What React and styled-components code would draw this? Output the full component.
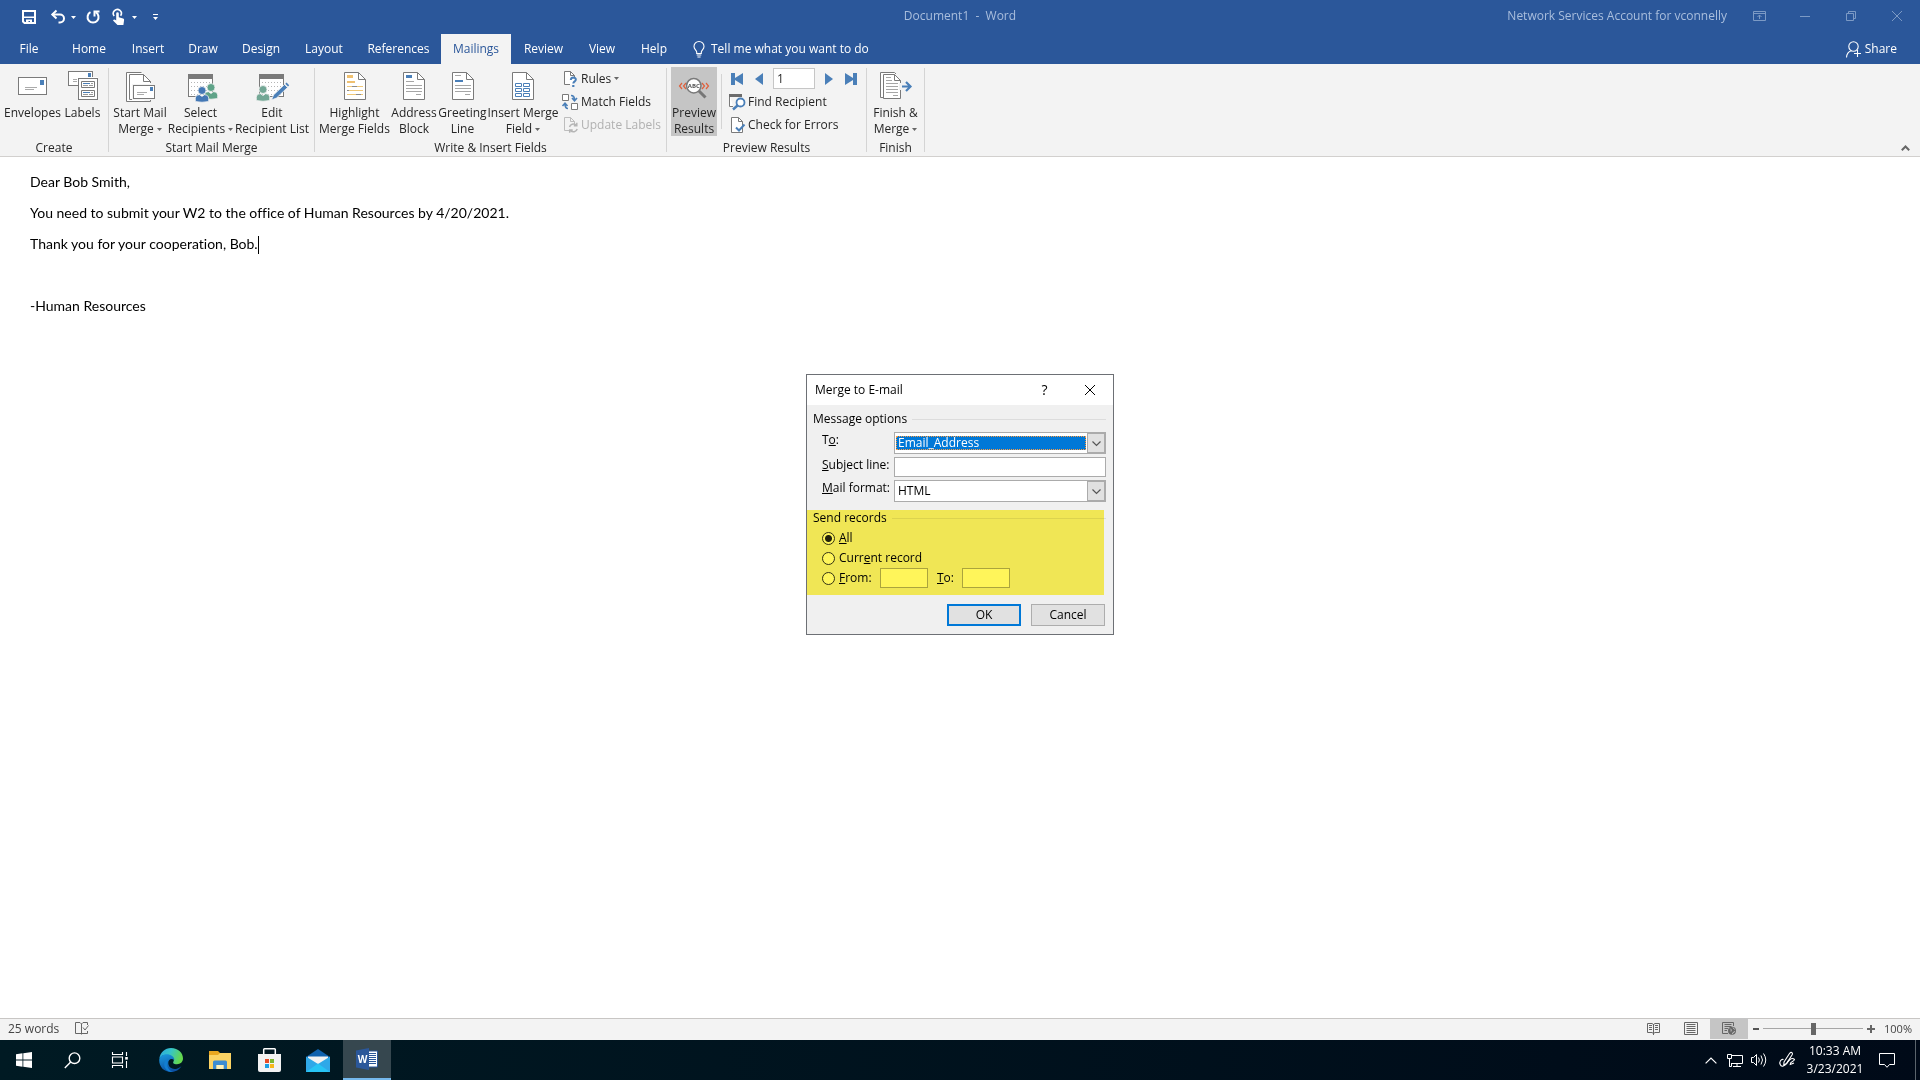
import React, { useState } from 'react';
import styled, { createGlobalStyle } from 'styled-components';

const GlobalStyle = createGlobalStyle`
  * {
    box-sizing: border-box;
  }
  body {
    margin: 0;
    font-family: 'Open Sans', 'Noto Sans', sans-serif;
    font-size: 12px;
    line-height: 16px;
    color: #262626;
  }
  button, input, select {
    font: inherit;
    color: inherit;
  }
  button {
    padding: 0;
    border: 0;
    background: none;
    white-space: nowrap;
  }
  svg {
    display: block;
    flex: none;
    overflow: visible;
  }
`;

const Screen = styled.div`
  display: flex;
  flex-direction: column;
  min-height: 100vh;
  background: white;
`;

/* Title bar */

const TitleBar = styled.header`
  display: grid;
  grid-template-columns: 1fr auto 1fr;
  align-items: center;
  height: 34px;
  padding-bottom: 2px;
  background: #2b579a;
  color: #a9bedd;
`;

const QuickAccess = styled.div`
  display: flex;
  align-items: center;
  padding: 2px 0 0 22px;
`;

const QuickButton = styled.button`
  display: flex;
  align-items: center;
  justify-content: center;
  width: ${({ $width }) => $width}px;
  height: 26px;
  margin-right: ${({ $gap }) => $gap || 0}px;
`;

const WindowTitle = styled.div`
  white-space: pre;
`;

const WindowTools = styled.div`
  display: flex;
  align-items: center;
  justify-content: flex-end;
`;

const Account = styled.span`
  margin-right: 9px;
`;

const WindowButton = styled.button`
  display: flex;
  align-items: center;
  justify-content: center;
  width: 46px;
  height: 30px;
`;

/* Tabs */

const TabBar = styled.nav`
  display: flex;
  height: 30px;
  background: #2b579a;
  color: white;
`;

const Tab = styled.button`
  width: ${({ $width }) => $width}px;
  background: ${({ $active }) => ($active ? '#f3f3f3' : 'transparent')};
  color: ${({ $active }) => ($active ? '#2b579a' : 'white')};
`;

const TellMe = styled.button`
  display: flex;
  align-items: center;
  gap: 6px;
  padding-left: 13px;
`;

const Share = styled.button`
  display: flex;
  align-items: center;
  gap: 4px;
  margin-left: auto;
  padding-right: 23px;
`;

/* Ribbon */

const Ribbon = styled.div`
  display: flex;
  height: 93px;
  background: #f3f3f3;
  border-bottom: 1px solid #d2d0ce;
`;

const Group = styled.section`
  display: flex;
  flex-direction: column;
  padding: 3px 5px 0 4px;
  background: linear-gradient(#d4d4d4, #d4d4d4) no-repeat right 4px / 1px 84px;
`;

const GroupRow = styled.div`
  display: flex;
  height: 74px;
`;

const GroupName = styled.div`
  text-align: center;
  white-space: nowrap;
`;

const LargeButton = styled.button`
  display: flex;
  flex-direction: column;
  align-items: center;
  width: ${({ $width }) => $width}px;
  height: 69px;
  padding-top: 3px;
  background: ${({ $pressed }) => ($pressed ? '#c5c5c5' : 'transparent')};

  > svg {
    margin-bottom: 1px;
  }
`;

const ButtonLine = styled.span`
  display: flex;
  align-items: center;
  gap: 3px;
`;

const SmallColumn = styled.div`
  width: ${({ $width }) => $width}px;
  padding-left: ${({ $indent }) => $indent}px;
`;

const SmallButton = styled.button`
  display: flex;
  align-items: center;
  gap: 2px;
  height: 23px;
  color: ${({ disabled }) => (disabled ? '#b1b1b1' : 'inherit')};
`;

const Divider = styled.div`
  width: 1px;
  height: 55px;
  margin: 7px 0 0 4px;
  background: #d4d4d4;
`;

const RecordNav = styled.div`
  display: flex;
  align-items: center;
  gap: 12px;
  height: 23px;
  padding-left: 2px;
`;

const RecordInput = styled.input`
  width: 42px;
  height: 21px;
  margin: 0 -2px;
  padding: 0 3px;
  border: 1px solid #c6c6c6;
  background: white;
`;

const Collapse = styled.button`
  margin: auto 10px 5px auto;
`;

/* Document */

const Page = styled.main`
  flex: 1;
  padding: 15px 30px;
  font-family: Lato, 'Open Sans', sans-serif;
  font-size: 14px;
  font-variant-ligatures: none;
  line-height: 20px;
  color: black;
`;

const Paragraph = styled.p`
  min-height: 20px;
  margin: 0 0 11px;
`;

const TextCaret = styled.span`
  display: inline-block;
  width: 1px;
  height: 18px;
  background: black;
  vertical-align: middle;
`;

/* Dialog */

const DialogLayer = styled.div`
  position: absolute;
  top: 374px;
  left: 0;
  right: 0;
  display: flex;
  justify-content: center;
`;

const Dialog = styled.form`
  width: 308px;
  border: 1px solid #6d7075;
  background: #f0f0f0;
  color: black;
`;

const DialogHeader = styled.div`
  display: flex;
  align-items: center;
  height: 30px;
  padding: 0 1px 0 8px;
  background: white;
`;

const DialogTitle = styled.h1`
  flex: 1;
  margin: 0;
  font-size: 12px;
  font-weight: normal;
`;

const DialogButton = styled.button`
  display: flex;
  align-items: center;
  justify-content: center;
  width: ${({ $width }) => $width}px;
  height: 28px;
  font-size: 14px;
`;

const Section = styled.fieldset`
  position: relative;
  min-width: 0;
  margin: 0;
  padding: 6px 7px 8px 6px;
  border: 0;
`;

const HighlightedSection = styled(Section)`
  padding: 0 7px 7px 6px;

  &::after {
    content: '';
    position: absolute;
    inset: 0 9px 0 0;
    background: #fff55a;
    mix-blend-mode: multiply;
    pointer-events: none;
  }
`;

const SectionTitle = styled.div`
  display: flex;
  align-items: center;
  gap: 5px;
  height: 16px;

  &::after {
    content: '';
    flex: 1;
    height: 1px;
    background: #dcdcdc;
  }
`;

const Field = styled.div`
  display: flex;
  margin-top: 3px;
  padding-left: 9px;
`;

const FieldLabel = styled.label`
  width: 72px;
`;

const FieldList = styled.div`
  padding-top: 2px;
`;

const TextBox = styled.input`
  flex: 1;
  min-width: 0;
  height: 20px;
  padding: 0 4px;
  border: 1px solid #ababab;
  background: white;
`;

const SelectBox = styled.div`
  display: flex;
  flex: 1;
  align-items: center;
  height: 22px;
  padding-left: 1px;
  border: 1px solid #ababab;
  background: white;
`;

const Select = styled.select`
  flex: 1;
  min-width: 0;
  height: ${({ $selected }) => ($selected ? 14 : 18)}px;
  padding: 0 1px;
  border: ${({ $selected }) => ($selected ? '1px dotted #ff9a3c' : '1px solid white')};
  background: ${({ $selected }) => ($selected ? '#0078d7' : 'white')};
  color: ${({ $selected }) => ($selected ? 'white' : 'black')};
  line-height: 12px;
  appearance: none;
`;

const SelectArrow = styled.span`
  display: flex;
  align-items: center;
  justify-content: center;
  width: 18px;
  height: 20px;
  margin-left: 1px;
  border: 1px solid #ababab;
  background: #e1e1e1;
  pointer-events: none;
`;

const RadioRow = styled.div`
  display: flex;
  align-items: center;
  height: 20px;
  padding-left: 9px;
`;

const RadioList = styled.div`
  padding-top: 2px;
`;

const Radio = styled.input`
  width: 13px;
  height: 13px;
  margin: 0 4px 0 0;
  border: 1px solid #333;
  border-radius: 50%;
  background: white;
  appearance: none;

  &:checked {
    background: radial-gradient(circle, #222 3px, white 4px);
  }
`;

const RangeLabel = styled.label`
  width: ${({ $width }) => $width}px;
`;

const RangeInput = styled.input`
  width: 48px;
  height: 20px;
  margin-right: 9px;
  padding: 0 3px;
  border: 1px solid #ababab;
  background: white;
`;

const DialogActions = styled.div`
  display: flex;
  justify-content: flex-end;
  gap: 10px;
  padding: 9px 8px 8px;
`;

const ActionButton = styled.button`
  width: 74px;
  height: 22px;
  border: ${({ $primary }) => ($primary ? '2px solid #0078d7' : '1px solid #adadad')};
  background: #e1e1e1;
`;

/* Status bar */

const StatusBar = styled.footer`
  display: flex;
  align-items: center;
  height: 22px;
  padding: 0 8px 2px;
  border-top: 1px solid #c8c6c4;
  background: #f3f3f3;
  color: #444;
`;

const ProofingButton = styled.button`
  margin-left: 16px;
`;

const StatusTools = styled.div`
  display: flex;
  align-items: center;
  margin-left: auto;
`;

const ViewButton = styled.button`
  display: flex;
  align-items: center;
  justify-content: center;
  width: 38px;
  height: 21px;
  background: ${({ $active }) => ($active ? '#c5c5c5' : 'transparent')};
`;

const ZoomButton = styled.button`
  display: flex;
  align-items: center;
  justify-content: center;
  width: 15px;
  height: 20px;
`;

const ZoomSlider = styled.input`
  width: 100px;
  height: 20px;
  margin: 0;
  background: linear-gradient(#a6a6a6, #a6a6a6) no-repeat center / 100% 1px;
  appearance: none;

  &::-webkit-slider-thumb {
    width: 5px;
    height: 12px;
    background: #666;
    appearance: none;
  }
`;

const ZoomValue = styled.span`
  width: 34px;
  text-align: right;
  font-size: 11px;
`;

/* Taskbar */

const Taskbar = styled.div`
  display: flex;
  height: 40px;
  background: linear-gradient(to right, #001a23, #000a18);
  color: white;
`;

const TaskApps = styled.div`
  display: flex;
  gap: ${({ $gap }) => $gap || 0}px;
  margin-right: 3px;
`;

const TaskButton = styled.button`
  display: flex;
  align-items: center;
  justify-content: center;
  width: 48px;
  height: 40px;
  background: ${({ $active }) => ($active ? '#36474f' : 'transparent')};
  border-bottom: ${({ $active }) => ($active ? '2px solid #76b9ed' : '0')};
`;

const Tray = styled.div`
  display: flex;
  align-items: center;
  margin-left: auto;
`;

const TrayButton = styled.button`
  display: flex;
  align-items: center;
  justify-content: center;
  width: ${({ $width }) => $width || 24}px;
  height: 40px;
`;

const Clock = styled.button`
  width: 64px;
  line-height: 18px;
  text-align: center;
`;

const ShowDesktop = styled.button`
  width: 5px;
  height: 40px;
  margin-left: 8px;
  border-left: 1px solid #5b646c;
`;

/* Icons */

const GRAY = '#7a7a7a';
const BLUE = '#4a7fb8';

const Caret = ({ color = '#666' }) => (
  <svg width="5" height="3" viewBox="0 0 5 3"><path d="M0 0H5L2.5 3Z" fill={color} /></svg>
);

const SaveIcon = () => (
  <svg width="14" height="14" viewBox="0 0 14 14">
    <path d="M1 1H13V13H2.5L1 11.5Z" fill="none" stroke="white" strokeWidth="2" />
    <path d="M2 6.5H12V8H2ZM4 9.5H10V14H8V11H6.5V14H4Z" fill="white" />
  </svg>
);

const UndoIcon = () => (
  <svg width="14" height="14" viewBox="0 0 14 14" fill="none" stroke="white" strokeWidth="2">
    <path d="M1 4.5H9A4 4 0 0 1 9 12.5H7.5" />
    <path d="M5.5 0.5L1.3 4.5L5.5 8.5" />
  </svg>
);

const RedoIcon = () => (
  <svg width="14" height="14" viewBox="0 0 14 14" fill="none" stroke="white" strokeWidth="2">
    <path d="M4.5 2.2A5.5 5.5 0 1 0 9.6 2.2" />
    <path d="M13.5 1.5H8.5V6.5" />
  </svg>
);

const TouchIcon = () => (
  <svg width="13" height="16" viewBox="0 0 13 16">
    <path d="M2.2 7A4 4 0 1 1 8.6 6.8" fill="none" stroke="white" strokeWidth="1.6" />
    <path d="M4.2 4.5a1.3 1.3 0 0 1 2.6 0V8.2l4.3 1.2q1.2.4 1 1.6L11.4 16H5.5L1 11.4q1-1.6 2.6-.4l.6.5Z" fill="white" />
  </svg>
);

const CustomizeIcon = () => (
  <svg width="5" height="6" viewBox="0 0 5 6"><path d="M0 0H5V1H0ZM0 3H5L2.5 6Z" fill="white" /></svg>
);

const RibbonOptionsIcon = () => (
  <svg width="13" height="10" viewBox="0 0 13 10" fill="none" stroke="#7c9ac5">
    <path d="M.5 .5H12.5V9.5H.5ZM.5 2.5H12.5M6.5 8V4M4.5 6L6.5 4L8.5 6" />
  </svg>
);

const MinimizeIcon = () => (
  <svg width="10" height="10" viewBox="0 0 10 10"><path d="M0 5.5H10" stroke="#7c9ac5" /></svg>
);

const RestoreIcon = () => (
  <svg width="10" height="10" viewBox="0 0 10 10" fill="none" stroke="#7c9ac5">
    <path d="M.5 2.5H7.5V9.5H.5ZM2.5 2.5V.5H9.5V7.5H7.5" />
  </svg>
);

const CloseIcon = ({ color = '#7c9ac5' }) => (
  <svg width="10" height="10" viewBox="0 0 10 10"><path d="M0 0L10 10M10 0L0 10" stroke={color} /></svg>
);

const BulbIcon = () => (
  <svg width="12" height="17" viewBox="0 0 12 17" fill="none" stroke="white" strokeWidth="1.1">
    <path d="M3.7 12.5V11C3.7 9.5 1 8.3 1 5.4A5 4.9 0 0 1 11 5.4C11 8.3 8.3 9.5 8.3 11V12.5ZM3.7 14H8.3M4.4 16H7.6" />
  </svg>
);

const ShareIcon = () => (
  <svg width="15" height="17" viewBox="0 0 15 17" fill="none" stroke="white" strokeWidth="1.1">
    <circle cx="7.5" cy="5.5" r="4.7" />
    <path d="M.5 16.5C.7 12.8 2.7 10.6 5.4 9.8M11.5 9V16M8 12.5H15" />
  </svg>
);

const EnvelopeIcon = () => (
  <svg width="36" height="34" viewBox="0 0 36 34">
    <rect x="3.5" y="7.5" width="28" height="17" fill="white" stroke={GRAY} />
    <rect x="25" y="10" width="4" height="5" fill={BLUE} />
    <path d="M10 17.5H22M10 19.5H19" stroke="#ababab" />
  </svg>
);

const LabelsIcon = () => (
  <svg width="36" height="34" viewBox="0 0 36 34">
    <rect x="3.5" y="1.5" width="24" height="14" fill="white" stroke={GRAY} />
    <rect x="23" y="3" width="3" height="4" fill={BLUE} />
    <path d="M8 9.5H12M8 11.5H12" stroke="#ababab" />
    <path d="M12 7H33V8H12Z" fill="white" />
    <rect x="13.5" y="8.5" width="19" height="21" fill="white" stroke={GRAY} />
    <path d="M16.5 11.5H29.5V17.5H16.5ZM16.5 20.5H29.5V26.5H16.5Z" fill="white" stroke={GRAY} />
    <path d="M18 13.5H25M18 22.5H25" stroke={BLUE} />
    <path d="M26 13.5H28M26 22.5H28M18 15.5H23M24 15.5H28M18 24.5H23M24 24.5H28" stroke="#999" />
  </svg>
);

const StartMergeIcon = () => (
  <svg width="36" height="34" viewBox="0 0 36 34">
    <path d="M4.5 31.5V2.5H19.5L22.5 5V31.5Z" fill="white" />
    <path d="M19.5 2.5H4.5V31.5H28.5V29" fill="none" stroke={GRAY} />
    <path d="M7.5 4.5H21.5L28.5 11.5V29.5H7.5Z" fill="white" />
    <path d="M28.5 13V11.5L21.5 4.5H7.5V29.5H10M21.5 4.5V11.5H28.5" fill="none" stroke={GRAY} />
    <path d="M10 14H34V30H10Z" fill="#f3f3f3" />
    <rect x="11.5" y="15.5" width="21" height="13" fill="white" stroke={GRAY} />
    <rect x="28" y="17" width="3" height="4" fill={BLUE} />
    <path d="M15 22.5H25M15 24.5H22" stroke="#ababab" />
  </svg>
);

const DOTS = [0, 1, 2, 3].flatMap((row) => [0, 1, 2, 3, 4, 5, 6].map((col) => [8 + col * 3, 12 + row * 4]));

const CalendarSheet = () => (
  <g>
    <rect x="5.5" y="5.5" width="24" height="21" fill="white" stroke={GRAY} />
    <rect x="5" y="4" width="25" height="5" fill={GRAY} />
    {DOTS.map(([x, y]) => <rect key={`${x}-${y}`} x={x} y={y} width="1" height="1" fill="#b5b5b5" />)}
  </g>
);

const Person = ({ x, y, color }) => (
  <g transform={`translate(${x} ${y})`} fill={color} stroke="#f3f3f3" strokeWidth="0.8">
    <path d="M-6.7 11V8Q-6.7 4.5-2.5 4.2L0 6L2.5 4.2Q6.7 4.5 6.7 8V11Q0 12.5-6.7 11Z" />
    <circle cx="0" cy="0" r="4" />
  </g>
);

const SelectRecipientsIcon = () => (
  <svg width="36" height="34" viewBox="0 0 36 34">
    <CalendarSheet />
    <Person x={28} y={17.5} color="#5fa388" />
    <Person x={19} y={20.5} color="#4478b5" />
  </svg>
);

const EditListIcon = () => (
  <svg width="36" height="34" viewBox="0 0 36 34">
    <CalendarSheet />
    <Person x={9} y={19.5} color="#73a795" />
    <path d="M17.5 30L19.5 25L30.5 14.5L33.5 17.5L22.5 28Z" fill={BLUE} stroke="#f3f3f3" strokeWidth="0.8" />
    <path d="M31.3 13.8L32.6 12.6L35.2 15.2L34 16.5Z" fill={BLUE} />
  </svg>
);

const Sheet = () => (
  <g stroke={GRAY}>
    <path d="M7.5 2.5H21.5L28.5 9.5V29.5H7.5Z" fill="white" />
    <path d="M21.5 2.5V9.5H28.5" fill="none" />
  </g>
);

const HighlightIcon = () => (
  <svg width="36" height="34" viewBox="0 0 36 34">
    <Sheet />
    <path d="M10 5H16V8H10ZM10 11H18V13H10Z" fill="#efc070" />
    <path d="M10 16.5H26M10 20.5H26M10 24.5H26" stroke="#efc777" />
    <path d="M15 16.5H20M10 20.5H12M19 24.5H24" stroke="#8c8c8c" />
  </svg>
);

const AddressIcon = () => (
  <svg width="36" height="34" viewBox="0 0 36 34">
    <Sheet />
    <rect x="10" y="5" width="6" height="3" fill={BLUE} />
    <path d="M10 11.5H18M10 15.5H26M10 18.5H26M10 21.5H26M20 24.5H25" stroke="#a6a6a6" />
  </svg>
);

const GreetingIcon = () => (
  <svg width="36" height="34" viewBox="0 0 36 34">
    <Sheet />
    <rect x="10" y="10" width="8" height="2" fill={BLUE} />
    <path d="M10 5.5H16M10 15.5H26M10 18.5H26M10 21.5H26M20 24.5H25" stroke="#a6a6a6" />
  </svg>
);

const InsertFieldIcon = () => (
  <svg width="36" height="34" viewBox="0 0 36 34">
    <Sheet />
    <path d="M10.5 13.5H16.5V16.5H10.5ZM18.5 13.5H24.5V16.5H18.5ZM10.5 18.5H16.5V21.5H10.5ZM18.5 18.5H24.5V21.5H18.5ZM10.5 23.5H16.5V26.5H10.5ZM18.5 23.5H24.5V26.5H18.5Z" fill="white" stroke={BLUE} />
  </svg>
);

const SmallSheet = ({ color = GRAY }) => (
  <path d="M8 13.5H2.5V.5H8.5L12.5 4.5V7M8.5 .5V4.5H12.5" fill="none" stroke={color} />
);

const RulesIcon = () => (
  <svg width="17" height="16" viewBox="0 0 17 16">
    <path d="M2.5 .5H9L12.5 4V13.5H2.5Z" fill="white" />
    <SmallSheet />
    <path d="M8.8 9Q9 6.5 11.3 6.5Q14 6.7 13.8 8.8C13.6 10.4 11.3 10.5 11.3 12.6" fill="none" stroke={BLUE} strokeWidth="2" />
    <rect x="10.2" y="14" width="2.2" height="2" fill={BLUE} />
  </svg>
);

const MatchIcon = () => (
  <svg width="17" height="16" viewBox="0 0 17 16">
    <path d="M.5 .5H6.5V6.5H.5ZM9.5 9.5H15.5V15.5H9.5Z" fill="white" stroke={GRAY} />
    <path d="M9 1.5Q12.5 1.5 12.5 6M10 4L12.5 6.7L15 4M6 14.5Q3 14.5 3 10M.5 12L3 9.3L5.5 12" fill="none" stroke={BLUE} strokeWidth="1.6" />
  </svg>
);

const UpdateIcon = () => (
  <svg width="17" height="16" viewBox="0 0 17 16">
    <SmallSheet color="#bdbdbd" />
    <path d="M7.5 10A4 4 0 0 1 14 8M14.8 5.8V8.7H11.8M15.2 12A4 4 0 0 1 8.5 13.5M7.7 15.8V13H10.7" fill="none" stroke="#b5b5b5" strokeWidth="1.5" />
  </svg>
);

const PreviewIcon = () => (
  <svg width="36" height="34" viewBox="0 0 36 34">
    <path d="M6 13L3.5 16L6 19M10 13L7.5 16L10 19M26 13L28.5 16L26 19M30 13L32.5 16L30 19" fill="none" stroke="#e0603c" strokeWidth="1.2" />
    <path d="M22.5 20.5L29.5 27.5" stroke="#777" strokeWidth="3" />
    <circle cx="17.8" cy="15.7" r="7.2" fill="white" stroke="#7a7a7a" strokeWidth="1.5" />
    <text x="17.8" y="18" textAnchor="middle" fontSize="6" fontWeight="700" fill="#555">ABC</text>
  </svg>
);

const FirstIcon = () => (
  <svg width="12" height="12" viewBox="0 0 12 12"><path d="M0 0H4V5L12 0V12L4 7V12H0Z" fill={BLUE} /></svg>
);

const PreviousIcon = () => (
  <svg width="8" height="12" viewBox="0 0 8 12"><path d="M8 0V12L0 6Z" fill={BLUE} /></svg>
);

const NextIcon = () => (
  <svg width="8" height="12" viewBox="0 0 8 12"><path d="M0 0V12L8 6Z" fill={BLUE} /></svg>
);

const LastIcon = () => (
  <svg width="12" height="12" viewBox="0 0 12 12"><path d="M12 0H8V5L0 0V12L8 7V12H12Z" fill={BLUE} /></svg>
);

const FindIcon = () => (
  <svg width="17" height="16" viewBox="0 0 17 16">
    <path d="M.5 1V12.5H4" fill="white" stroke={GRAY} />
    <path d="M0 0H13V3H0Z" fill="#6b6b6b" />
    <circle cx="11.5" cy="8.5" r="4" fill="white" stroke={BLUE} strokeWidth="1.8" />
    <path d="M8.5 11.5L4 15.5" stroke={BLUE} strokeWidth="2.4" />
  </svg>
);

const CheckIcon = () => (
  <svg width="17" height="16" viewBox="0 0 17 16">
    <path d="M2.5 .5H9.5L13.5 4.5V15.5H2.5Z" fill="white" stroke={GRAY} />
    <path d="M9.5 .5V4.5H13.5" fill="none" stroke={GRAY} />
    <path d="M7 10.5L10 13.5L15.5 7.5" fill="none" stroke={BLUE} strokeWidth="2" />
  </svg>
);

const FinishIcon = () => (
  <svg width="36" height="34" viewBox="0 0 36 34">
    <path d="M5 27.5H2.5V2.5H16.5L18 4" fill="white" stroke={GRAY} />
    <path d="M5.5 4.5H16.5L22.5 10.5V28.5H5.5Z" fill="white" stroke={GRAY} />
    <path d="M16.5 4.5V10.5H22.5" fill="none" stroke={GRAY} />
    <path d="M8 7.5H13M8 10.5H14M8 13.5H20M8 16.5H20M8 19.5H20M8 22.5H20M15 25.5H20" stroke="#a6a6a6" />
    <path d="M21 13H24V20H21Z" fill="#f3f3f3" />
    <path d="M24 16.5H32M28 12L32.5 16.5L28 21" fill="none" stroke={BLUE} strokeWidth="2.2" />
  </svg>
);

const CollapseIcon = () => (
  <svg width="9" height="6" viewBox="0 0 9 6"><path d="M.8 5.2L4.5 1.5L8.2 5.2" fill="none" stroke="#666" strokeWidth="2" /></svg>
);

const DropIcon = () => (
  <svg width="9" height="5" viewBox="0 0 9 5"><path d="M.5 .5L4.5 4.5L8.5 .5" fill="none" stroke="#555" strokeWidth="1.2" /></svg>
);

const ProofingIcon = () => (
  <svg width="14" height="13" viewBox="0 0 14 13" fill="none" stroke="#666">
    <path d="M6.5 11.5H.5V.5H5L6.5 2L8 .5H12.5V3M6.5 2V12.5M6.5 11.5H12.5V9M8 5.5L10 8L13.5 3.5" />
  </svg>
);

const ReadIcon = () => (
  <svg width="13" height="13" viewBox="0 0 13 13" fill="none" stroke="#666">
    <path d="M.5 1.5H5L6.5 2.5L8 1.5H12.5V10.5H8L6.5 11.5L5 10.5H.5ZM6.5 2V13M2 3.5H5M2 5.5H5M2 7.5H5M8 3.5H11M8 5.5H11M8 7.5H11" />
  </svg>
);

const PrintIcon = () => (
  <svg width="14" height="13" viewBox="0 0 14 13" fill="none" stroke="#666">
    <path d="M.5 .5H13.5V12.5H.5ZM2.5 2.5H11.5M2.5 4.5H11.5M2.5 6.5H11.5M2.5 8.5H11.5M2.5 10.5H11.5" />
  </svg>
);

const WebIcon = () => (
  <svg width="14" height="13" viewBox="0 0 14 13" fill="none" stroke="#666">
    <path d="M6 11.5H.5V.5H11.5V4M2.5 2.5H9.5M2.5 4.5H9.5M2.5 6.5H6M2.5 8.5H5" />
    <circle cx="10" cy="8.8" r="4" fill="#666" stroke="none" />
    <path d="M8 6.5Q10 7.5 9 9.5M10.5 12Q10 10.5 13 9.5M11 5.5L12.5 7.5" stroke="#c5c5c5" />
  </svg>
);

const MinusIcon = () => (
  <svg width="6" height="2" viewBox="0 0 6 2"><path d="M0 0H6V2H0Z" fill="#555" /></svg>
);

const PlusIcon = () => (
  <svg width="8" height="8" viewBox="0 0 8 8"><path d="M3 0H5V3H8V5H5V8H3V5H0V3H3Z" fill="#666" /></svg>
);

const WindowsIcon = () => (
  <svg width="16" height="16" viewBox="0 0 16 16">
    <path d="M0 2.2L6.5 1.3V7.5H0ZM7.3 1.2L16 0V7.5H7.3ZM0 8.4H6.5V14.7L0 13.8ZM7.3 8.4H16V16L7.3 14.8Z" fill="white" />
  </svg>
);

const SearchIcon = () => (
  <svg width="17" height="17" viewBox="0 0 17 17" fill="none" stroke="white" strokeWidth="1.4">
    <circle cx="10.5" cy="6.2" r="5.3" /><path d="M6.7 10L.8 16" />
  </svg>
);

const TaskViewIcon = () => (
  <svg width="16" height="16" viewBox="0 0 16 16" fill="none" stroke="white" strokeWidth="1.1">
    <path d="M.5 0V2.5H10.5V0M.5 5H10.5V11H.5ZM.5 16V13.5H10.5V16M14.5 0V4M14.5 9V16" />
    <rect x="13.2" y="5" width="2.6" height="2.6" fill="white" stroke="none" />
  </svg>
);

const EdgeIcon = () => (
  <svg width="24" height="24" viewBox="0 0 24 24">
    <defs>
      <linearGradient id="edgeTop" x1="0" y1="0" x2="1" y2="0.3">
        <stop offset="0" stopColor="#2ba7e0" /><stop offset="0.5" stopColor="#36c5c9" /><stop offset="1" stopColor="#64d84e" />
      </linearGradient>
      <linearGradient id="edgeLow" x1="0" y1="0" x2="0.4" y2="1">
        <stop offset="0" stopColor="#1b9be0" /><stop offset="1" stopColor="#0c50a3" />
      </linearGradient>
    </defs>
    <path d="M.4 10.5C1.2 4.5 6 0 12 0C19.5 0 24 5.2 24 10.5C24 14 21.3 16.2 18 16.2C14.5 16.2 13.6 15 14.5 13.5C16.3 10.5 12 7 7.5 7C4.3 7 1.8 8 .4 10.5Z" fill="url(#edgeTop)" />
    <path d="M.2 12C.4 8.5 4 6.3 7.5 6.3C12 6.3 15.5 9 15.3 12C12 9.5 9 12 9.3 15.2C9.7 19.8 14 22 18.5 20.4C21 19.7 22 18.5 22.5 18C20.5 21.7 16.6 24 12 24C5.3 24 0 19 .2 12Z" fill="url(#edgeLow)" />
    <path d="M9.5 12C6.7 16 8.4 22 13.7 23.8C8.5 24.5 4 20 5.5 14.5C6.2 12.5 8 11.5 9.5 12Z" fill="#127ed0" />
  </svg>
);

const FolderIcon = () => (
  <svg width="22" height="18" viewBox="0 0 22 18">
    <path d="M0 0H9L11 2H22V6H0Z" fill="#e9a720" />
    <path d="M0 4H9L11 2H22V18H0Z" fill="#fbd364" />
    <path d="M4 18V11Q4 9.5 5.5 9.5H16.5Q18 9.5 18 11V18H14.5V14H7.5V18Z" fill="#3c8cd2" />
    <path d="M7.5 14H14.5V18H7.5Z" fill="#fff0b8" />
  </svg>
);

const StoreIcon = () => (
  <svg width="23" height="24" viewBox="0 0 23 24">
    <path d="M5.7 7V1.5Q5.7 .7 6.5 .7H16.5Q17.3 .7 17.3 1.5V7" fill="none" stroke="white" strokeWidth="1.5" />
    <path d="M0 6H23V22Q23 24 21 24H2Q0 24 0 22Z" fill="#f2f2f2" />
    <path d="M7 11H11V15H7Z" fill="#e74b25" /><path d="M12 11H16V15H12Z" fill="#7db72f" />
    <path d="M7 16H11V20H7Z" fill="#1a9ee3" /><path d="M12 16H16V20H12Z" fill="#f7b719" />
  </svg>
);

const MailIcon = () => (
  <svg width="24" height="23" viewBox="0 0 24 23">
    <path d="M0 8L12 0L24 8V14H0Z" fill="#0f61ad" />
    <path d="M2 7.5H22V15H2Z" fill="#f2f2f2" />
    <path d="M0 7.5L12 15L24 7.5V23H0Z" fill="#2fa8e8" />
    <path d="M0 23L12 14.5L24 23Z" fill="#27c4f4" />
  </svg>
);

const WordIcon = () => (
  <svg width="22" height="22" viewBox="0 0 22 22">
    <path d="M12 3H21.5V19H12Z" fill="white" stroke="#2b579a" />
    <path d="M13 5.5H20M13 7.5H20M13 9.5H20M13 11.5H20M13 13.5H20M13 15.5H20" stroke="#2b579a" />
    <path d="M0 2.5L13 0V22L0 19.5Z" fill="#2b579a" />
    <text x="6.5" y="14.5" textAnchor="middle" fontSize="10" fontWeight="700" fill="white">W</text>
  </svg>
);

const ChevronUpIcon = () => (
  <svg width="12" height="7" viewBox="0 0 12 7"><path d="M.6 6.4L6 1L11.4 6.4" fill="none" stroke="white" strokeWidth="1.2" /></svg>
);

const NetworkIcon = () => (
  <svg width="16" height="13" viewBox="0 0 16 13" fill="none" stroke="white">
    <path d="M5 1.5H15.5V9.5H4.5M2.5 5V12.5M10 9.5V12.5M6 12.5H14" />
    <path d="M.5 .5H4.5V4.5H.5ZM2.5 5V12.5H4.5V9" />
  </svg>
);

const VolumeIcon = () => (
  <svg width="16" height="14" viewBox="0 0 16 14" fill="none" stroke="white">
    <path d="M.5 4.5H2.5L5.5 1.5V12.5L2.5 9.5H.5ZM7.5 4.5Q9.3 7 7.5 9.5M10 2.5Q13 7 10 11.5M12.5 .5Q17 7 12.5 13.5" />
  </svg>
);

const PenIcon = () => (
  <svg width="16" height="16" viewBox="0 0 16 16" fill="none" stroke="white" strokeWidth="1.1">
    <path d="M5 10L10.5 1.5Q12-.5 13.3 1Q13.8 1.7 13 3L7.5 11.5L4.8 13Z" />
    <path d="M4.5 7.5C2 6.8 0 10 1.2 12.5C2.5 16 6 13.5 7.7 11.5C9 9 12.5 4.5 15.5 7.5C15 10 11 9 11.2 12.5L15 11" />
  </svg>
);

const NoticeIcon = () => (
  <svg width="16" height="15" viewBox="0 0 16 15"><path d="M.5 .5H15.5V11.5H10.5L8 14.3L5.5 11.5H.5Z" fill="none" stroke="white" /></svg>
);

const TABS = [
  { name: 'File', width: 58 },
  { name: 'Home', width: 62 },
  { name: 'Insert', width: 56 },
  { name: 'Draw', width: 54 },
  { name: 'Design', width: 62 },
  { name: 'Layout', width: 64 },
  { name: 'References', width: 85 },
  { name: 'Mailings', width: 70 },
  { name: 'Review', width: 65 },
  { name: 'View', width: 52 },
  { name: 'Help', width: 52 },
];

const BigTool = ({ icon, lines, width, menu, pressed }) => (
  <LargeButton type="button" $width={width} $pressed={pressed} aria-pressed={pressed}>
    {icon}
    {lines.map((line, index) => (
      <ButtonLine key={line}>
        {line}
        {menu && index === lines.length - 1 && <Caret />}
      </ButtonLine>
    ))}
  </LargeButton>
);

const MailingsRibbon = () => {
  const [record, setRecord] = useState('1');

  return (
    <Ribbon>
      <Group>
        <GroupRow>
          <BigTool icon={<EnvelopeIcon />} lines={['Envelopes']} width={57} />
          <BigTool icon={<LabelsIcon />} lines={['Labels']} width={43} />
        </GroupRow>
        <GroupName>Create</GroupName>
      </Group>
      <Group>
        <GroupRow>
          <BigTool icon={<StartMergeIcon />} lines={['Start Mail', 'Merge']} width={54} menu />
          <BigTool icon={<SelectRecipientsIcon />} lines={['Select', 'Recipients']} width={67} menu />
          <BigTool icon={<EditListIcon />} lines={['Edit', 'Recipient List']} width={76} />
        </GroupRow>
        <GroupName>Start Mail Merge</GroupName>
      </Group>
      <Group>
        <GroupRow>
          <BigTool icon={<HighlightIcon />} lines={['Highlight', 'Merge Fields']} width={71} />
          <BigTool icon={<AddressIcon />} lines={['Address', 'Block']} width={48} />
          <BigTool icon={<GreetingIcon />} lines={['Greeting', 'Line']} width={49} />
          <BigTool icon={<InsertFieldIcon />} lines={['Insert Merge', 'Field']} width={72} menu />
          <SmallColumn $width={103} $indent={3}>
            <SmallButton type="button"><RulesIcon /><ButtonLine>Rules<Caret /></ButtonLine></SmallButton>
            <SmallButton type="button"><MatchIcon />Match Fields</SmallButton>
            <SmallButton type="button" disabled><UpdateIcon />Update Labels</SmallButton>
          </SmallColumn>
        </GroupRow>
        <GroupName>Write &amp; Insert Fields</GroupName>
      </Group>
      <Group>
        <GroupRow>
          <BigTool icon={<PreviewIcon />} lines={['Preview', 'Results']} width={46} pressed />
          <Divider />
          <SmallColumn $width={140} $indent={7}>
            <RecordNav>
              <button type="button" aria-label="First record"><FirstIcon /></button>
              <button type="button" aria-label="Previous record"><PreviousIcon /></button>
              <RecordInput aria-label="Record" value={record} onChange={(e) => setRecord(e.target.value)} />
              <button type="button" aria-label="Next record"><NextIcon /></button>
              <button type="button" aria-label="Last record"><LastIcon /></button>
            </RecordNav>
            <SmallButton type="button"><FindIcon />Find Recipient</SmallButton>
            <SmallButton type="button"><CheckIcon />Check for Errors</SmallButton>
          </SmallColumn>
        </GroupRow>
        <GroupName>Preview Results</GroupName>
      </Group>
      <Group>
        <GroupRow>
          <BigTool icon={<FinishIcon />} lines={['Finish &', 'Merge']} width={49} menu />
        </GroupRow>
        <GroupName>Finish</GroupName>
      </Group>
      <Collapse type="button" aria-label="Collapse the ribbon"><CollapseIcon /></Collapse>
    </Ribbon>
  );
};

const MergeDialog = () => {
  const [records, setRecords] = useState('all');
  const pick = (e) => setRecords(e.target.value);

  return (
    <DialogLayer>
      <Dialog role="dialog" aria-labelledby="merge-title" onSubmit={(e) => e.preventDefault()}>
        <DialogHeader>
          <DialogTitle id="merge-title">Merge to E-mail</DialogTitle>
          <DialogButton type="button" $width={45}>?</DialogButton>
          <DialogButton type="button" $width={45} aria-label="Close"><CloseIcon color="black" /></DialogButton>
        </DialogHeader>
        <Section>
          <SectionTitle>Message options</SectionTitle>
          <FieldList>
            <Field>
              <FieldLabel htmlFor="to">T<u>o</u>:</FieldLabel>
              <SelectBox>
                <Select id="to" $selected><option>Email_Address</option></Select>
                <SelectArrow><DropIcon /></SelectArrow>
              </SelectBox>
            </Field>
            <Field>
              <FieldLabel htmlFor="subject"><u>S</u>ubject line:</FieldLabel>
              <TextBox id="subject" />
            </Field>
            <Field>
              <FieldLabel htmlFor="format"><u>M</u>ail format:</FieldLabel>
              <SelectBox>
                <Select id="format"><option>HTML</option></Select>
                <SelectArrow><DropIcon /></SelectArrow>
              </SelectBox>
            </Field>
          </FieldList>
        </Section>
        <HighlightedSection>
          <SectionTitle>Send records</SectionTitle>
          <RadioList>
            <RadioRow>
              <Radio type="radio" name="records" id="all" value="all" checked={records === 'all'} onChange={pick} />
              <label htmlFor="all"><u>A</u>ll</label>
            </RadioRow>
            <RadioRow>
              <Radio type="radio" name="records" id="current" value="current" checked={records === 'current'} onChange={pick} />
              <label htmlFor="current">Curr<u>e</u>nt record</label>
            </RadioRow>
            <RadioRow>
              <Radio type="radio" name="records" id="from" value="from" checked={records === 'from'} onChange={pick} />
              <RangeLabel htmlFor="from" $width={41}><u>F</u>rom:</RangeLabel>
              <RangeInput aria-label="From record" />
              <RangeLabel htmlFor="to-record" $width={25}><u>T</u>o:</RangeLabel>
              <RangeInput id="to-record" />
            </RadioRow>
          </RadioList>
        </HighlightedSection>
        <DialogActions>
          <ActionButton type="submit" $primary>OK</ActionButton>
          <ActionButton type="button">Cancel</ActionButton>
        </DialogActions>
      </Dialog>
    </DialogLayer>
  );
};

const WordStatus = () => {
  const [zoom, setZoom] = useState(50);

  return (
    <StatusBar>
      <span>25 words</span>
      <ProofingButton type="button" aria-label="Proofing"><ProofingIcon /></ProofingButton>
      <StatusTools>
        <ViewButton type="button" aria-label="Read mode"><ReadIcon /></ViewButton>
        <ViewButton type="button" aria-label="Print layout"><PrintIcon /></ViewButton>
        <ViewButton type="button" aria-label="Web layout" $active><WebIcon /></ViewButton>
        <ZoomButton type="button" aria-label="Zoom out"><MinusIcon /></ZoomButton>
        <ZoomSlider type="range" aria-label="Zoom" value={zoom} onChange={(e) => setZoom(e.target.value)} />
        <ZoomButton type="button" aria-label="Zoom in"><PlusIcon /></ZoomButton>
        <ZoomValue>100%</ZoomValue>
      </StatusTools>
    </StatusBar>
  );
};

const WindowsTaskbar = () => (
  <Taskbar>
    <TaskApps>
      <TaskButton aria-label="Start"><WindowsIcon /></TaskButton>
      <TaskButton aria-label="Search"><SearchIcon /></TaskButton>
      <TaskButton aria-label="Task view"><TaskViewIcon /></TaskButton>
    </TaskApps>
    <TaskApps $gap={1}>
      <TaskButton aria-label="Edge"><EdgeIcon /></TaskButton>
      <TaskButton aria-label="File Explorer"><FolderIcon /></TaskButton>
      <TaskButton aria-label="Store"><StoreIcon /></TaskButton>
      <TaskButton aria-label="Mail"><MailIcon /></TaskButton>
      <TaskButton aria-label="Word" $active><WordIcon /></TaskButton>
    </TaskApps>
    <Tray>
      <TrayButton aria-label="Show hidden icons"><ChevronUpIcon /></TrayButton>
      <TrayButton aria-label="Network"><NetworkIcon /></TrayButton>
      <TrayButton aria-label="Volume"><VolumeIcon /></TrayButton>
      <TrayButton $width={32} aria-label="Windows Ink"><PenIcon /></TrayButton>
      <Clock>10:33 AM<br />3/23/2021</Clock>
      <TrayButton $width={40} aria-label="Notifications"><NoticeIcon /></TrayButton>
      <ShowDesktop aria-label="Show desktop" />
    </Tray>
  </Taskbar>
);

const App = () => (
  <Screen>
    <GlobalStyle />
    <TitleBar>
      <QuickAccess>
        <QuickButton $width={14} $gap={15} aria-label="Save"><SaveIcon /></QuickButton>
        <QuickButton $width={14} $gap={6} aria-label="Undo"><UndoIcon /></QuickButton>
        <QuickButton $width={5} $gap={10} aria-label="Undo history"><Caret color="white" /></QuickButton>
        <QuickButton $width={14} $gap={12} aria-label="Repeat"><RedoIcon /></QuickButton>
        <QuickButton $width={13} $gap={7} aria-label="Touch mode"><TouchIcon /></QuickButton>
        <QuickButton $width={5} $gap={16} aria-label="Touch mode options"><Caret color="white" /></QuickButton>
        <QuickButton $width={5} aria-label="Customize toolbar"><CustomizeIcon /></QuickButton>
      </QuickAccess>
      <WindowTitle>Document1  -  Word</WindowTitle>
      <WindowTools>
        <Account>Network Services Account for vconnelly</Account>
        <WindowButton aria-label="Ribbon display options"><RibbonOptionsIcon /></WindowButton>
        <WindowButton aria-label="Minimize"><MinimizeIcon /></WindowButton>
        <WindowButton aria-label="Restore"><RestoreIcon /></WindowButton>
        <WindowButton aria-label="Close"><CloseIcon /></WindowButton>
      </WindowTools>
    </TitleBar>
    <TabBar>
      {TABS.map(({ name, width }) => (
        <Tab key={name} type="button" $width={width} $active={name === 'Mailings'}>{name}</Tab>
      ))}
      <TellMe type="button"><BulbIcon />Tell me what you want to do</TellMe>
      <Share type="button"><ShareIcon />Share</Share>
    </TabBar>
    <MailingsRibbon />
    <Page>
      <Paragraph>Dear Bob Smith,</Paragraph>
      <Paragraph>You need to submit your W2 to the office of Human Resources by 4/20/2021.</Paragraph>
      <Paragraph>Thank you for your cooperation, Bob.<TextCaret /></Paragraph>
      <Paragraph />
      <Paragraph>-Human Resources</Paragraph>
    </Page>
    <WordStatus />
    <WindowsTaskbar />
    <MergeDialog />
  </Screen>
);

export default App;
